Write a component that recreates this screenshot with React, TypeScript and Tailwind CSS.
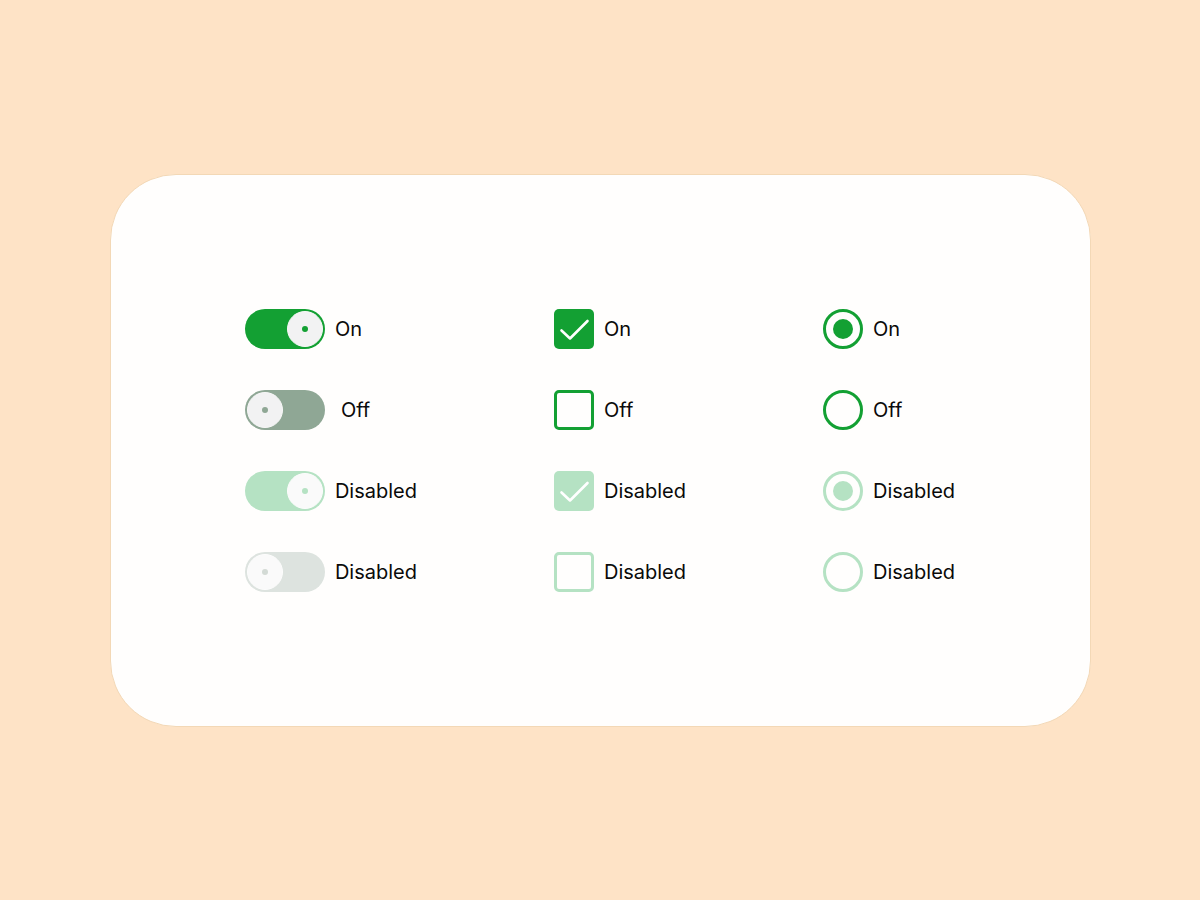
import React, { FC } from "react";

type State = "on" | "off" | "disabledOn" | "disabledOff";

const font = { fontFamily: "Inter, 'Noto Sans', sans-serif" };

const Toggle: FC<{ state: State }> = ({ state }) => {
  const track = {
    on: "bg-[#13a033] justify-end",
    off: "bg-[#8fa795] justify-start",
    disabledOn: "bg-[#b5e2c3] justify-end",
    disabledOff: "bg-[#dde3df] justify-start",
  }[state];
  const knob = {
    on: "bg-[#f2f2f3] border-[#f8f8f8]",
    off: "bg-[#f2f2f3] border-[#f8f8f8]",
    disabledOn: "bg-[#fafafa] border-[#fdfdfd]",
    disabledOff: "bg-[#fafafa] border-[#fdfdfd]",
  }[state];
  const dot = {
    on: "bg-[#13a033]",
    off: "bg-[#8fa795]",
    disabledOn: "bg-[#b5e2c3]",
    disabledOff: "bg-[#d3dad5]",
  }[state];
  return (
    <div className={`w-[80px] h-[40px] rounded-full p-[2px] flex items-center ${track}`}>
      <div className={`w-[36px] h-[36px] rounded-full border-[1.5px] flex items-center justify-center ${knob}`}>
        <div className={`w-[6px] h-[6px] rounded-full ${dot}`} />
      </div>
    </div>
  );
};

const Checkbox: FC<{ state: State }> = ({ state }) => {
  const box = {
    on: "bg-[#13a033]",
    off: "border-[3px] border-[#13a033]",
    disabledOn: "bg-[#b5e2c3]",
    disabledOff: "border-[3px] border-[#b5e2c3]",
  }[state];
  const checked = state === "on" || state === "disabledOn";
  return (
    <div className={`w-[40px] h-[40px] rounded-[5px] ${box}`}>
      {checked && (
        <svg width="40" height="40" viewBox="0 0 40 40" fill="none">
          <path
            d="M7.5 21.5 L16 29.5 L33.5 12"
            stroke="white"
            strokeWidth="2.6"
            strokeLinecap="round"
            strokeLinejoin="round"
          />
        </svg>
      )}
    </div>
  );
};

const Radio: FC<{ state: State }> = ({ state }) => {
  const ring =
    state === "on" || state === "off" ? "border-[#13a033]" : "border-[#b5e2c3]";
  const inner = {
    on: "bg-[#13a033]",
    off: "",
    disabledOn: "bg-[#b5e2c3]",
    disabledOff: "",
  }[state];
  return (
    <div className={`w-[40px] h-[40px] rounded-full border-[3px] flex items-center justify-center ${ring}`}>
      {inner && <div className={`w-[20px] h-[20px] rounded-full ${inner}`} />}
    </div>
  );
};

const rows: { state: State; label: string }[] = [
  { state: "on", label: "On" },
  { state: "off", label: "Off" },
  { state: "disabledOn", label: "Disabled" },
  { state: "disabledOff", label: "Disabled" },
];

const Label: FC<{ text: string; extra?: boolean }> = ({ text, extra }) => (
  <span className={`text-[20px] leading-none text-[#0a0a0a] ${extra ? "ml-[6px]" : ""}`}>{text}</span>
);

const App: FC = () => {
  return (
    <div className="w-full min-h-screen bg-[#fee3c6] flex items-center justify-center" style={font}>
      <div className="w-[981px] h-[553px] bg-[#fffefd] border border-[#f3d8b6] rounded-[66px] flex items-center justify-center">
        <div className="flex gap-[137px]">
          <div className="flex flex-col gap-[41px]">
            {rows.map((r, i) => (
              <div key={i} className="flex items-center gap-[10px]">
                <Toggle state={r.state} />
                <Label text={r.label} extra={r.state === "off"} />
              </div>
            ))}
          </div>
          <div className="flex flex-col gap-[41px]">
            {rows.map((r, i) => (
              <div key={i} className="flex items-center gap-[10px]">
                <Checkbox state={r.state} />
                <Label text={r.label} />
              </div>
            ))}
          </div>
          <div className="flex flex-col gap-[41px]">
            {rows.map((r, i) => (
              <div key={i} className="flex items-center gap-[10px]">
                <Radio state={r.state} />
                <Label text={r.label} />
              </div>
            ))}
          </div>
        </div>
      </div>
    </div>
  );
};

export default App;
